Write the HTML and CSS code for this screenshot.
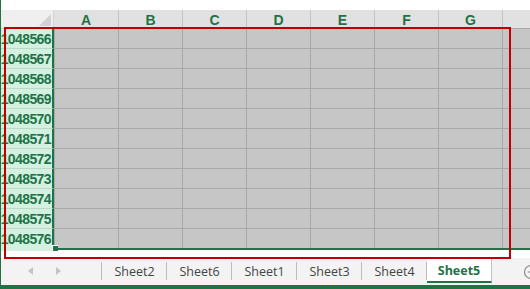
FILE: index.html
```html
<!DOCTYPE html>
<html>
<head>
<meta charset="utf-8">
<link rel="stylesheet" href="styles.css">
</head>
<body>
<div class="window">
  <div class="topband"></div>
  <div class="sheet">
    <div class="corner"><svg width="14" height="14" viewBox="0 0 14 14"><polygon points="13,1 13,13 1,13" fill="#d2d2d2"/></svg></div>
    <div class="ch">A</div><div class="ch">B</div><div class="ch">C</div><div class="ch">D</div><div class="ch">E</div><div class="ch">F</div><div class="ch">G</div><div class="ch"></div>

    <div class="rh">1048566</div><div class="c"></div><div class="c"></div><div class="c"></div><div class="c"></div><div class="c"></div><div class="c"></div><div class="c"></div><div class="c"></div>
    <div class="rh">1048567</div><div class="c"></div><div class="c"></div><div class="c"></div><div class="c"></div><div class="c"></div><div class="c"></div><div class="c"></div><div class="c"></div>
    <div class="rh">1048568</div><div class="c"></div><div class="c"></div><div class="c"></div><div class="c"></div><div class="c"></div><div class="c"></div><div class="c"></div><div class="c"></div>
    <div class="rh">1048569</div><div class="c"></div><div class="c"></div><div class="c"></div><div class="c"></div><div class="c"></div><div class="c"></div><div class="c"></div><div class="c"></div>
    <div class="rh">1048570</div><div class="c"></div><div class="c"></div><div class="c"></div><div class="c"></div><div class="c"></div><div class="c"></div><div class="c"></div><div class="c"></div>
    <div class="rh">1048571</div><div class="c"></div><div class="c"></div><div class="c"></div><div class="c"></div><div class="c"></div><div class="c"></div><div class="c"></div><div class="c"></div>
    <div class="rh">1048572</div><div class="c"></div><div class="c"></div><div class="c"></div><div class="c"></div><div class="c"></div><div class="c"></div><div class="c"></div><div class="c"></div>
    <div class="rh">1048573</div><div class="c"></div><div class="c"></div><div class="c"></div><div class="c"></div><div class="c"></div><div class="c"></div><div class="c"></div><div class="c"></div>
    <div class="rh">1048574</div><div class="c"></div><div class="c"></div><div class="c"></div><div class="c"></div><div class="c"></div><div class="c"></div><div class="c"></div><div class="c"></div>
    <div class="rh">1048575</div><div class="c"></div><div class="c"></div><div class="c"></div><div class="c"></div><div class="c"></div><div class="c"></div><div class="c"></div><div class="c"></div>
    <div class="rh">1048576</div><div class="c"></div><div class="c"></div><div class="c"></div><div class="c"></div><div class="c"></div><div class="c"></div><div class="c"></div><div class="c"></div>

    <div class="rh-end"></div><div class="sel-bottom"></div>
    <div class="rh-below"></div><div class="below"></div>
  </div>
  <div class="tabbar">
    <div class="nav">
      <span class="arrow left"></span>
      <span class="arrow right"></span>
    </div>
    <div class="tabs">
      <div class="tab">Sheet2</div>
      <div class="tab">Sheet6</div>
      <div class="tab">Sheet1</div>
      <div class="tab">Sheet3</div>
      <div class="tab">Sheet4</div>
      <div class="tab active">Sheet5</div>
    </div>
    <div class="add"><svg width="16" height="16" viewBox="0 0 16 16"><circle cx="8" cy="8" r="6.5" fill="none" stroke="#8a8a8a" stroke-width="1.2"/><path d="M4.8 8h6.4M8 4.8v6.4" stroke="#8a8a8a" stroke-width="1.2"/></svg></div>
  </div>
  <div class="statusbar"></div>
  <div class="redbox"></div>
  <div class="handle"></div>
</div>
</body>
</html>
```
FILE: styles.css
```css
html, body {
  margin: 0;
  padding: 0;
  background: #ffffff;
}
body {
  width: 530px;
  height: 289px;
  overflow: hidden;
  font-family: "Liberation Sans", Arial, sans-serif;
}
.window {
  position: relative;
  width: 529px;
  height: 289px;
  border-left: 1px solid #217346;
  display: flex;
  flex-direction: column;
  overflow: hidden;
}
.topband {
  height: 10px;
  flex: none;
  background: #ffffff;
}
.sheet {
  flex: none;
  display: grid;
  grid-template-columns: 53px repeat(7, 64px) 28px;
  grid-template-rows: 18px repeat(11, 20px) 2px 8px;
  overflow: hidden;
}
.corner {
  background: #efefef;
  border-right: 1px solid #d4d4d4;
  box-sizing: border-box;
  display: flex;
  align-items: flex-end;
  justify-content: flex-end;
  padding: 0 1px 1px 0;
}
.corner svg { display: block; }
.ch {
  background: #e1e1e1;
  border-left: 1px solid #c4c4c4;
  box-sizing: border-box;
  color: #217346;
  font-weight: bold;
  font-size: 14px;
  display: flex;
  align-items: center;
  justify-content: center;
  padding-top: 2px;
}
.ch:nth-child(2) { border-left: none; }
.rh {
  background: #d3f0e0;
  border-right: 2px solid #217346;
  border-top: 1px solid #b9dcc8;
  box-sizing: border-box;
  color: #217346;
  font-weight: bold;
  font-size: 14px;
  letter-spacing: -0.6px;
  display: flex;
  align-items: center;
  justify-content: flex-end;
  padding-right: 1px;
  padding-top: 1px;
  overflow: hidden;
  white-space: nowrap;
}
.c {
  background: #c6c6c6;
  border-left: 1px solid #a9a9a9;
  border-top: 1px solid #a9a9a9;
  box-sizing: border-box;
}
.rh-end {
  background: #d3f0e0;
  border-right: 2px solid #217346;
  box-sizing: border-box;
}
.sel-bottom {
  grid-column: 2 / 10;
  background: #217346;
}
.rh-below {
  background: #d3f0e0;
  height: 1px;
}
.below {
  grid-column: 2 / 10;
  background: #ffffff;
}
.tabbar {
  height: 27px;
  flex: none;
  background: #f3f3f3;
  display: flex;
  align-items: stretch;
}
.nav {
  width: 101px;
  flex: none;
  display: flex;
  align-items: center;
  padding-left: 27px;
  gap: 23px;
  box-sizing: border-box;
  border-right: 1px solid #bcbcbc;
  margin: 4px 0 5px 0;
}
.arrow {
  width: 0;
  height: 0;
  border-top: 4px solid transparent;
  border-bottom: 4px solid transparent;
}
.arrow.left { border-right: 5px solid #c3c3c3; }
.arrow.right { border-left: 5px solid #c3c3c3; }
.tabs {
  display: flex;
  align-items: stretch;
}
.tab {
  width: 65px;
  box-sizing: border-box;
  display: flex;
  align-items: center;
  justify-content: center;
  font-family: "Open Sans", "Liberation Sans", sans-serif;
  font-size: 12.5px;
  color: #444444;
  position: relative;
}
.tab::after {
  content: "";
  position: absolute;
  right: 0;
  top: 4px;
  bottom: 5px;
  width: 1px;
  background: #bcbcbc;
}
.tab.active {
  background: #ffffff;
  color: #217346;
  font-weight: bold;
  border-right: 1px solid #c0c0c0;
  border-bottom: 2px solid #217346;
  padding-top: 1px;
  margin-bottom: 2px;
}
.tab.active::after { display: none; }
.add {
  margin-left: 31px;
  flex: none;
  display: flex;
  align-items: center;
}
.add svg { display: block; }
.statusbar {
  flex: 1;
  background: #217346;
}
.redbox {
  position: absolute;
  left: 3px;
  top: 27px;
  width: 503px;
  height: 228px;
  border: 2px solid #c00000;
  pointer-events: none;
}
.handle {
  position: absolute;
  left: 51px;
  top: 245px;
  width: 5px;
  height: 5px;
  background: #217346;
  border: 1px solid #ffffff;
  border-width: 1px 0 0 1px;
}
```
